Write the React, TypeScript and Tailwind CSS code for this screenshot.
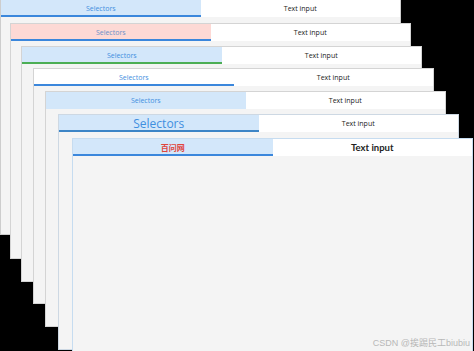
import React from 'react';

interface WinProps {
  left: number;
  top: number;
  frame: string;
  selTab: string;
  selLabel: React.ReactNode;
  inputLabel: string;
  inputText: string;
}

const Win: React.FC<WinProps> = ({ left, top, frame, selTab, selLabel, inputLabel, inputText }) => (
  <div
    className={`absolute w-[401px] h-[236px] flex flex-col bg-[#f4f4f4] border ${frame}`}
    style={{ left, top }}
  >
    <div className="grid grid-cols-2 h-[17px] shrink-0">
      <div className={`flex items-center justify-center ${selTab}`}>{selLabel}</div>
      <div className={`flex items-center justify-center bg-white ${inputText}`}>{inputLabel}</div>
    </div>
    <div className="flex-1" />
  </div>
);

const small = "text-[7px] leading-none font-['Open_Sans',sans-serif]";

export default function App() {
  const windows: WinProps[] = [
    {
      left: 0, top: -1, frame: 'border-[#cdcdcd]',
      selTab: 'bg-[#d3e7fa] shadow-[inset_0_-2px_0_#3b87dc]',
      selLabel: <span className={`${small} text-[#3f8fe0]`}>Selectors</span>,
      inputLabel: 'Text input', inputText: `${small} text-[#222]`,
    },
    {
      left: 10, top: 23, frame: 'border-[#d4d4d4]',
      selTab: 'bg-[#fdd9d5] shadow-[inset_0_-2px_0_#3b87dc]',
      selLabel: <span className={`${small} text-[#6b90c9]`}>Selectors</span>,
      inputLabel: 'Text input', inputText: `${small} text-[#222]`,
    },
    {
      left: 21, top: 46, frame: 'border-[#d4d4d4]',
      selTab: 'bg-[#d3e7fa] shadow-[inset_0_-2px_0_#4cae55]',
      selLabel: <span className={`${small} text-[#3f8fe0]`}>Selectors</span>,
      inputLabel: 'Text input', inputText: `${small} text-[#222]`,
    },
    {
      left: 33, top: 68, frame: 'border-[#d4d4d4]',
      selTab: 'bg-white shadow-[inset_0_-2px_0_#3b87dc]',
      selLabel: <span className={`${small} text-[#3f8fe0]`}>Selectors</span>,
      inputLabel: 'Text input', inputText: `${small} text-[#222]`,
    },
    {
      left: 45, top: 91, frame: 'border-[#d4d4d4]',
      selTab: 'bg-[#d3e7fa]',
      selLabel: <span className={`${small} text-[#3f8fe0]`}>Selectors</span>,
      inputLabel: 'Text input', inputText: `${small} text-[#222]`,
    },
    {
      left: 58, top: 114, frame: 'border-[#cdd8e3]',
      selTab: 'bg-[#d3e7fa] shadow-[inset_0_-2px_0_#3d85c6]',
      selLabel: <span className="text-[12px] leading-none font-['Open_Sans',sans-serif] text-[#3f8fe0]">Selectors</span>,
      inputLabel: 'Text input', inputText: `${small} text-[#222]`,
    },
    {
      left: 72, top: 138, frame: 'border-[#c6dcf0]',
      selTab: 'bg-[#d3e7fa] shadow-[inset_0_-2px_0_#3b87dc]',
      selLabel: (
        <span className="text-[8px] font-bold leading-none text-[#e0453d] font-['Noto_Sans_CJK_SC',sans-serif]">
          百问网
        </span>
      ),
      inputLabel: 'Text input',
      inputText: "text-[9.5px] font-bold leading-none text-[#222] font-['Lato',sans-serif]",
    },
  ];

  return (
    <div className="relative w-[474px] h-[351px] overflow-hidden bg-black">
      {windows.map((w, i) => (
        <Win key={i} {...w} />
      ))}
      <span className="absolute right-[4px] bottom-[3px] text-[9px] leading-none text-[#b8b8b8] font-['Liberation_Sans','Noto_Sans_CJK_SC',sans-serif]">
        CSDN @挨踢民工biubiu
      </span>
    </div>
  );
}
